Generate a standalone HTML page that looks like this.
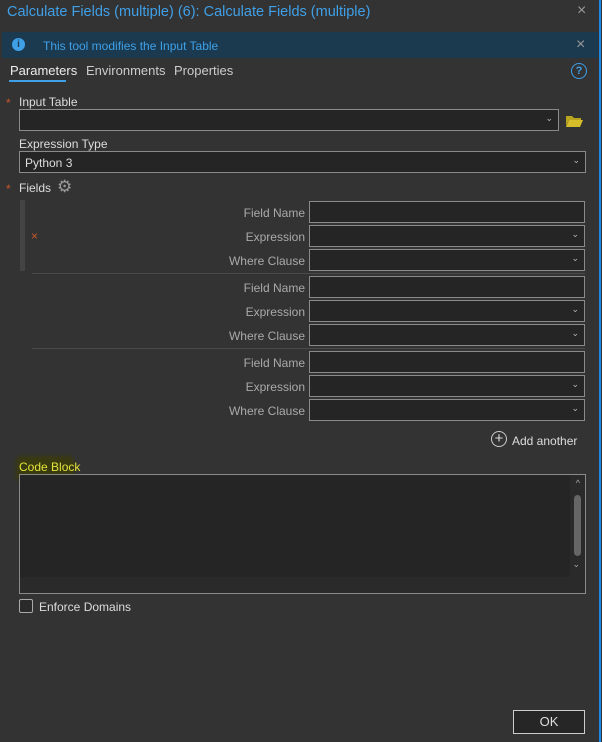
<!DOCTYPE html>
<html><head><style>
body{margin:0;width:602px;height:742px;background:#333;font-family:"Liberation Sans",sans-serif;font-size:12px;color:#ddd;position:relative;overflow:hidden}
.a{position:absolute}
.box{position:absolute;background:#252525;border:1px solid #8a8a8a;box-sizing:border-box}
.lbl{position:absolute;color:#aaa;text-align:right;width:120px;font-size:12px}
.dd{position:absolute;right:5px;top:3px;color:#bbb;font-size:9px}
</style></head><body>
<div class="a" style="left:599px;top:0;width:2px;height:742px;background:#1e88e5"></div>
<div class="a" style="left:7px;top:4px;font-size:14.5px;color:#3fa0e8">Calculate Fields (multiple) (6): Calculate Fields (multiple)</div>
<div class="a" style="left:577px;top:2px;font-size:16px;color:#999">×</div>
<div class="a" style="left:2px;top:32px;width:596px;height:26px;background:#1b3a4f"></div>
<div class="a" style="left:12px;top:38px;width:13px;height:13px;border-radius:50%;background:#3fa0e8;color:#1b3a4f;font-size:10px;font-weight:bold;text-align:center;line-height:13px">i</div>
<div class="a" style="left:43px;top:39px;color:#3fa0e8">This tool modifies the Input Table</div>
<div class="a" style="left:576px;top:36px;font-size:16px;color:#999">×</div>
<div class="a" style="left:10px;top:63px;font-size:13px;color:#eee">Parameters</div>
<div class="a" style="left:9px;top:80px;width:57px;height:2px;background:#3fa0e8"></div>
<div class="a" style="left:86px;top:63px;font-size:13px;color:#ccc">Environments</div>
<div class="a" style="left:174px;top:63px;font-size:13px;color:#ccc">Properties</div>
<div class="a" style="left:571px;top:63px;width:14px;height:14px;border:1.5px solid #3fa0e8;border-radius:50%;color:#3fa0e8;font-size:11px;text-align:center;line-height:14px;font-weight:bold">?</div>
<div class="a" style="left:6px;top:96px;color:#c8572a">*</div>
<div class="a" style="left:19px;top:95px">Input Table</div>
<div class="box" style="left:19px;top:109px;width:540px;height:22px"><span class="dd">⌄</span></div>
<svg class="a" style="left:566px;top:114px" width="17" height="13"><path d="M0 2h6l2 2h7v2H3L0 12z" fill="#b9a41e"/><path d="M3 6h14l-3 7H0z" fill="#d6bd2a"/></svg>
<div class="a" style="left:19px;top:137px">Expression Type</div>
<div class="box" style="left:19px;top:151px;width:567px;height:22px"><span class="a" style="left:5px;top:4px;color:#ddd">Python 3</span><span class="dd">⌄</span></div>
<div class="a" style="left:6px;top:182px;color:#c8572a">*</div>
<div class="a" style="left:19px;top:181px">Fields</div>
<div class="a" style="left:57px;top:177px;font-size:17px;color:#999">⚙</div>
<div class="a" style="left:20px;top:200px;width:5px;height:71px;background:#444"></div>
<div class="a" style="left:31px;top:229px;color:#c8572a;font-size:12px">×</div>

<div class="lbl" style="left:185px;top:206px">Field Name</div><div class="box" style="left:309px;top:201px;width:276px;height:22px"></div>
<div class="lbl" style="left:185px;top:230px">Expression</div><div class="box" style="left:309px;top:225px;width:276px;height:22px"><span class="dd">⌄</span></div>
<div class="lbl" style="left:185px;top:254px">Where Clause</div><div class="box" style="left:309px;top:249px;width:276px;height:22px"><span class="dd">⌄</span></div>
<div class="a" style="left:32px;top:273px;width:553px;height:1px;background:#4a4a4a"></div>
<div class="lbl" style="left:185px;top:281px">Field Name</div><div class="box" style="left:309px;top:276px;width:276px;height:22px"></div>
<div class="lbl" style="left:185px;top:305px">Expression</div><div class="box" style="left:309px;top:300px;width:276px;height:22px"><span class="dd">⌄</span></div>
<div class="lbl" style="left:185px;top:329px">Where Clause</div><div class="box" style="left:309px;top:324px;width:276px;height:22px"><span class="dd">⌄</span></div>
<div class="a" style="left:32px;top:348px;width:553px;height:1px;background:#4a4a4a"></div>
<div class="lbl" style="left:185px;top:356px">Field Name</div><div class="box" style="left:309px;top:351px;width:276px;height:22px"></div>
<div class="lbl" style="left:185px;top:380px">Expression</div><div class="box" style="left:309px;top:375px;width:276px;height:22px"><span class="dd">⌄</span></div>
<div class="lbl" style="left:185px;top:404px">Where Clause</div><div class="box" style="left:309px;top:399px;width:276px;height:22px"><span class="dd">⌄</span></div>

<div class="a" style="left:491px;top:431px;width:14px;height:14px;border:1px solid #ccc;border-radius:50%;text-align:center;line-height:14px;font-size:15px;color:#ddd">+</div>
<div class="a" style="left:512px;top:434px;font-size:12px;color:#ddd">Add another</div>
<div class="a" style="left:16px;top:456px;width:58px;height:26px;background:#3a3a10;border-radius:6px;filter:blur(2px)"></div>
<div class="a" style="left:19px;top:460px;color:#e4e43a">Code Block</div>
<div class="box" style="left:19px;top:474px;width:567px;height:120px">
<div class="a" style="right:0;top:0;width:15px;height:118px;background:#2a2a2a"></div>
<div class="a" style="left:0;top:102px;width:551px;height:16px;background:#2a2a2a"></div>
<div class="a" style="right:4px;top:20px;width:7px;height:61px;background:#666;border-radius:4px"></div>
<div class="a" style="right:5px;top:3px;color:#aaa;font-size:9px">^</div>
<div class="a" style="right:5px;top:84px;color:#aaa;font-size:9px">⌄</div>
</div>
<div class="a" style="left:19px;top:599px;width:12px;height:12px;border:1px solid #aaa;border-radius:2px;background:#2a2a2a"></div>
<div class="a" style="left:39px;top:600px">Enforce Domains</div>
<div class="a" style="left:513px;top:710px;width:72px;height:24px;border:1px solid #ccc;box-sizing:border-box;background:#262626;text-align:center;line-height:22px;font-size:13px;color:#ddd">OK</div>
</body></html>
